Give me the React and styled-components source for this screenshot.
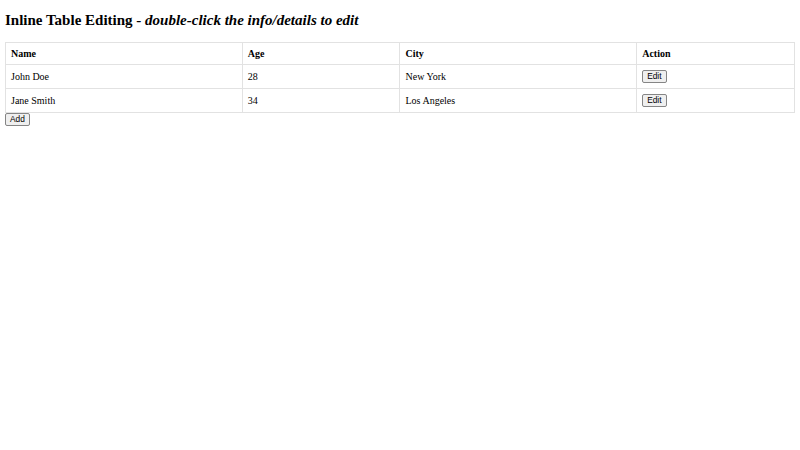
import React, { useState } from "react";
import styled, { createGlobalStyle } from "styled-components";

const Global = createGlobalStyle`
  html, body { margin: 0; padding: 0; background: #fff; }
  body { font-family: "Liberation Serif", "Times New Roman", serif; color: #000; font-size: 10px; }
`;

const Page = styled.div`
  padding: 0 5px 5px;
  overflow: hidden;
`;

const Title = styled.h2`
  font-size: 15px;
  font-weight: bold;
  margin: 12.45px 0;
  line-height: 17.25px;
  em { font-style: italic; }
`;

const Table = styled.table`
  width: 100%;
  border-collapse: collapse;
  font-size: 10px;
`;

const Th = styled.th`
  text-align: left;
  border: 1px solid #e2e2e2;
  padding: 5px;
  line-height: 11px;
  width: ${(p) => p.$w};
`;

const Td = styled.td`
  border: 1px solid #e2e2e2;
  padding: 5px;
  line-height: 11px;
  height: 13px;
`;

const SmallButton = styled.button`
  font-family: "Liberation Sans", Arial, sans-serif;
  font-size: 8.33px;
  line-height: 9px;
  padding: 1px 4px;
  border: 1px solid #858585;
  border-radius: 2px;
  background: #efefef;
  color: #000;
  margin: 0;
  vertical-align: top;
`;

export default function App() {
  const [rows] = useState([
    { name: "John Doe", age: 28, city: "New York" },
    { name: "Jane Smith", age: 34, city: "Los Angeles" },
  ]);
  return (
    <>
      <Global />
      <Page>
        <Title>
          Inline Table Editing - <em>double-click the info/details to edit</em>
        </Title>
        <Table>
          <thead>
            <tr>
              <Th $w="30%">Name</Th>
              <Th $w="20%">Age</Th>
              <Th $w="30%">City</Th>
              <Th $w="20%">Action</Th>
            </tr>
          </thead>
          <tbody>
            {rows.map((r) => (
              <tr key={r.name}>
                <Td>{r.name}</Td>
                <Td>{r.age}</Td>
                <Td>{r.city}</Td>
                <Td>
                  <SmallButton>Edit</SmallButton>
                </Td>
              </tr>
            ))}
          </tbody>
        </Table>
        <SmallButton>Add</SmallButton>
      </Page>
    </>
  );
}
